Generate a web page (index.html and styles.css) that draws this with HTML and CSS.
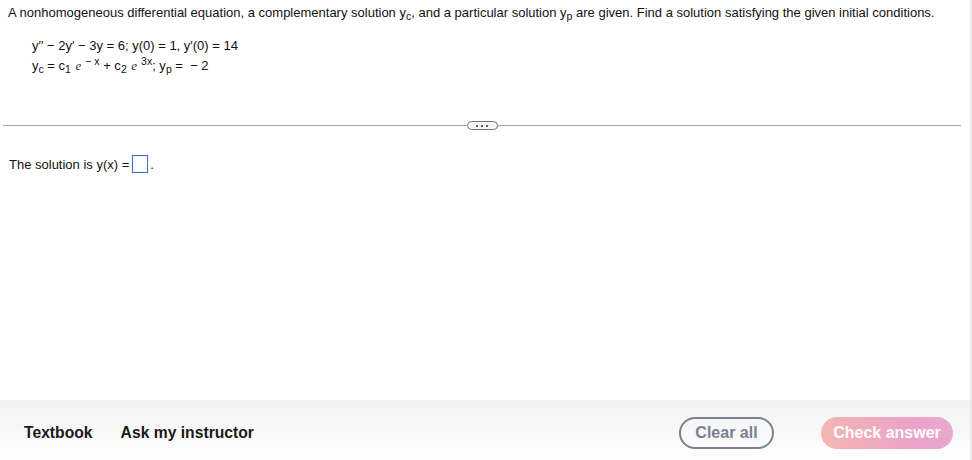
FILE: index.html
```html
<!DOCTYPE html>
<html>
<head>
<meta charset="utf-8">
<link rel="stylesheet" href="styles.css">
</head>
<body>
<div class="page">
  <main class="content">
    <p class="prompt">A nonhomogeneous differential equation, a complementary solution y<sub>c</sub>, and a particular solution y<sub>p</sub> are given. Find a solution satisfying the given initial conditions.</p>
    <div class="eqs">
      <div class="eq">y′′ − 2y′ − 3y = 6; y(0) = 1, y′(0) = 14</div>
      <div class="eq">y<sub>c</sub> = c<sub>1</sub> <span class="e">e</span><sup>&nbsp;− x</sup> + c<sub>2</sub> <span class="e">e</span><sup>&nbsp;3x</sup>; y<sub>p</sub> = &nbsp;− 2</div>
    </div>
    <div class="divider">
      <span class="line"></span>
      <span class="more"><i></i><i></i><i></i></span>
      <span class="line"></span>
    </div>
    <p class="answer">The solution is y(x) = <span class="box"></span>.</p>
  </main>
  <footer class="footer">
    <div class="links">
      <span class="link">Textbook</span>
      <span class="link">Ask my instructor</span>
    </div>
    <div class="actions">
      <button class="btn clear">Clear all</button>
      <button class="btn check">Check answer</button>
    </div>
  </footer>
</div>
</body>
</html>
```
FILE: styles.css
```css
html, body {
  margin: 0;
  padding: 0;
  height: 100%;
}
body {
  font-family: "Liberation Sans", Arial, sans-serif;
  color: #111;
  background: #fff;
}
.page {
  width: 970px;
  height: 460px;
  border-right: 2px solid #ececec;
  display: flex;
  flex-direction: column;
}
.content {
  flex: 1;
}
.prompt {
  margin: 0;
  padding: 4px 0 0 8px;
  font-size: 13px;
  line-height: 17px;
}
sub {
  font-size: 10.5px;
  vertical-align: -3px;
  line-height: 0;
}
sup {
  font-size: 10.5px;
  vertical-align: 5px;
  line-height: 0;
}
.eqs {
  padding: 15px 0 0 32px;
  font-size: 13px;
}
.eq {
  line-height: 20px;
}
.e {
  font-family: "Liberation Serif", serif;
  font-style: italic;
  font-size: 13px;
  color: #333;
  margin: 0 1px;
}
.divider {
  display: flex;
  align-items: center;
  margin: 45px 0 0 3px;
  width: 958px;
}
.line {
  flex: 1;
  height: 1px;
  background: #b99aa5;
}
.more {
  width: 29px;
  height: 7px;
  border: 1px solid #6e7686;
  border-radius: 5px;
  background: #f3f4f6;
  display: flex;
  align-items: center;
  justify-content: center;
  gap: 3px;
}
.more i {
  width: 2px;
  height: 2px;
  background: #555c6a;
  display: block;
}
.answer {
  margin: 25px 0 0 9px;
  font-size: 13px;
  display: flex;
  align-items: center;
}
.box {
  display: inline-block;
  width: 14px;
  height: 16px;
  border: 1.5px solid #3b6fd6;
  margin: 0 2px 0 3px;
}
.footer {
  box-sizing: border-box;
  height: 60px;
  background: linear-gradient(#f2f2f2, #fefefe);
  display: flex;
  align-items: center;
  justify-content: space-between;
  padding: 5px 17px 0 24px;
}
.links {
  display: flex;
  gap: 28px;
  font-size: 15.7px;
  font-weight: bold;
  color: #1a1a1a;
}
.actions {
  display: flex;
  gap: 47px;
  align-items: center;
}
.btn {
  font-family: "Liberation Sans", Arial, sans-serif;
  font-weight: bold;
  font-size: 16px;
  height: 32px;
  border-radius: 16px;
  cursor: pointer;
}
.clear {
  width: 95px;
  background: transparent;
  border: 2px solid #7b8090;
  color: #7b8090;
}
.check {
  width: 132px;
  border: none;
  color: #fff;
  background: linear-gradient(90deg, #f3b6b2, #eda2c8 70%, #e8a8d0);
}
```
